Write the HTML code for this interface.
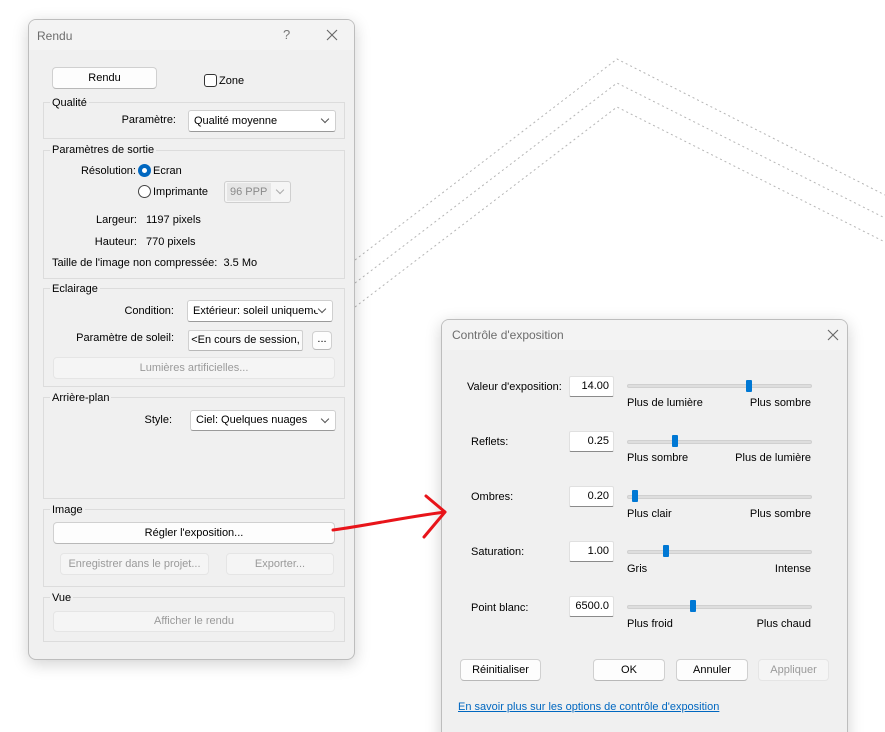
<!DOCTYPE html>
<html><head><meta charset="utf-8"><style>
*{box-sizing:border-box;margin:0;padding:0}
html,body{width:885px;height:732px;overflow:hidden}
body{background:#fff;font-family:"Liberation Sans",sans-serif;font-size:11px;color:#000;position:relative}
.a{position:absolute;white-space:nowrap;line-height:14px}
.dlg{position:absolute;background:#f0f0f0;border:1px solid #bdbdbd;border-radius:8px;box-shadow:0 4px 16px rgba(0,0,0,.18);overflow:hidden}
.tb{position:absolute;left:0;top:0;right:0;height:30px;background:#f3f3f3}
.grp{position:absolute;border:1px solid #dcdcdc}
.lbl{position:absolute;background:#f0f0f0;padding:0 2px;line-height:14px;white-space:nowrap}
.btn{position:absolute;background:#fdfdfd;border:1px solid #d0d0d0;border-bottom-color:#b8b8b8;border-radius:4px;text-align:center;line-height:20px;white-space:nowrap;overflow:hidden}
.dis{background:#f5f5f5;border-color:#e5e5e5;color:#9a9a9a}
.sel{position:absolute;background:#fff;border:1px solid #cfcfcf;border-bottom-color:#9a9a9a;border-radius:3px;padding-left:5px;line-height:20px;white-space:nowrap;overflow:hidden}
.chev{position:absolute;right:7px;top:5px;width:6px;height:6px;border-right:1px solid #555;border-bottom:1px solid #555;transform:rotate(45deg)}
.r{text-align:right}
.inp{position:absolute;width:45px;height:21px;background:#fff;border:1px solid #e0e0e0;border-bottom:1px solid #8a8a8a;border-radius:2px;text-align:right;padding-right:4px;line-height:19px}
.trk{position:absolute;left:627px;width:185px;height:4px;background:#dedede;border:1px solid #d0d0d0;border-radius:2px}
.th{position:absolute;width:6px;height:12px;background:#0078d4;border-radius:1px}
</style></head><body>

<svg style="position:absolute;left:0;top:0" width="885" height="732">
<g fill="none" stroke="#b5b5b5" stroke-width="1" stroke-dasharray="2,3">
<polyline points="355,260 617,59 885,195"/>
<polyline points="355,283 617,83 885,218"/>
<polyline points="355,307 617,107 885,242"/>
</g>
</svg>

<div class="dlg" style="left:28px;top:19px;width:327px;height:641px">
<div class="tb"></div>
<div class="a" style="left:8px;top:9px;color:#6d6d6d;font-size:12px">Rendu</div>
<div class="a" style="left:254px;top:8px;color:#777;font-size:13px">?</div>
<svg style="position:absolute;left:297px;top:9px" width="12" height="12"><path d="M1 1L11 11M11 1L1 11" stroke="#666" stroke-width="1.1"/></svg>
</div>

<div class="btn" style="left:52px;top:67px;width:105px;height:22px">Rendu</div>
<div style="position:absolute;left:204px;top:74px;width:13px;height:13px;border:1px solid #333;border-radius:3px;background:#fff"></div>
<div class="a" style="left:219px;top:74px">Zone</div>

<div class="grp" style="left:43px;top:102px;width:302px;height:37px"></div>
<div class="lbl" style="left:50px;top:96px">Qualité</div>
<div class="a r" style="left:100px;width:76px;top:113px">Paramètre:</div>
<div class="sel" style="left:188px;top:110px;width:148px;height:22px">Qualité moyenne<span class="chev"></span></div>

<div class="grp" style="left:43px;top:150px;width:302px;height:129px"></div>
<div class="lbl" style="left:50px;top:143px">Paramètres de sortie</div>
<div class="a r" style="left:60px;width:76px;top:164px">Résolution:</div>
<div style="position:absolute;left:138px;top:164px;width:13px;height:13px;border-radius:50%;background:#0067c0"><div style="position:absolute;left:4px;top:4px;width:5px;height:5px;border-radius:50%;background:#fff"></div></div>
<div class="a" style="left:153px;top:164px">Ecran</div>
<div style="position:absolute;left:138px;top:185px;width:13px;height:13px;border-radius:50%;border:1px solid #444;background:#fff"></div>
<div class="a" style="left:153px;top:185px">Imprimante</div>
<div class="sel" style="left:224px;top:181px;width:67px;height:22px;border-color:#cfcfcf;background:#f5f5f5;color:#8a8a8a;padding-left:2px"><span style="background:#e6e6e6;padding:0 3px;display:inline-block;width:44px;line-height:18px">96 PPP</span><span class="chev" style="border-color:#aaa"></span></div>
<div class="a r" style="left:60px;width:77px;top:213px">Largeur:</div>
<div class="a" style="left:146px;top:213px">1197 pixels</div>
<div class="a r" style="left:60px;width:77px;top:235px">Hauteur:</div>
<div class="a" style="left:146px;top:235px">770 pixels</div>
<div class="a" style="left:52px;top:256px">Taille de l'image non compressée:&nbsp; 3.5 Mo</div>

<div class="grp" style="left:43px;top:288px;width:302px;height:99px"></div>
<div class="lbl" style="left:50px;top:282px">Eclairage</div>
<div class="a r" style="left:60px;width:114px;top:304px">Condition:</div>
<div class="sel" style="left:187px;top:300px;width:146px;height:22px">Extérieur: soleil uniqueme<span class="chev" style="background:#fff;box-shadow:0 0 0 3px #fff"></span></div>
<div class="a r" style="left:60px;width:114px;top:331px">Paramètre de soleil:</div>
<div class="btn" style="left:188px;top:330px;width:115px;height:21px;border-radius:2px;background:#fafafa;line-height:19px">&lt;En cours de session,</div>
<div class="btn" style="left:312px;top:331px;width:20px;height:19px;line-height:15px">...</div>
<div class="btn dis" style="left:53px;top:357px;width:282px;height:22px">Lumières artificielles...</div>

<div class="grp" style="left:43px;top:397px;width:302px;height:102px"></div>
<div class="lbl" style="left:50px;top:391px">Arrière-plan</div>
<div class="a r" style="left:100px;width:72px;top:413px">Style:</div>
<div class="sel" style="left:190px;top:410px;width:146px;height:21px;line-height:19px">Ciel: Quelques nuages<span class="chev"></span></div>

<div class="grp" style="left:43px;top:509px;width:302px;height:78px"></div>
<div class="lbl" style="left:50px;top:503px">Image</div>
<div class="btn" style="left:53px;top:522px;width:282px;height:22px">Régler l'exposition...</div>
<div class="btn dis" style="left:60px;top:553px;width:149px;height:22px">Enregistrer dans le projet...</div>
<div class="btn dis" style="left:226px;top:553px;width:108px;height:22px">Exporter...</div>

<div class="grp" style="left:43px;top:597px;width:302px;height:45px"></div>
<div class="lbl" style="left:50px;top:591px">Vue</div>
<div class="btn dis" style="left:53px;top:611px;width:282px;height:21px;line-height:19px">Afficher le rendu</div>

<div class="dlg" style="left:441px;top:319px;width:407px;height:430px">
<div class="tb"></div>
<div class="a" style="left:10px;top:8px;color:#6d6d6d;font-size:12px">Contrôle d'exposition</div>
<svg style="position:absolute;left:385px;top:9px" width="12" height="12"><path d="M1 1L11 11M11 1L1 11" stroke="#666" stroke-width="1.1"/></svg>
</div>

<div class="a" style="left:467px;top:380px">Valeur d'exposition:</div>
<div class="inp" style="left:569px;top:376px">14.00</div>
<div class="trk" style="top:384px"></div><div class="th" style="left:746px;top:380px"></div>
<div class="a" style="left:627px;top:396px">Plus de lumière</div><div class="a r" style="left:700px;width:111px;top:396px">Plus sombre</div>

<div class="a" style="left:471px;top:435px">Reflets:</div>
<div class="inp" style="left:569px;top:431px">0.25</div>
<div class="trk" style="top:440px"></div><div class="th" style="left:672px;top:435px"></div>
<div class="a" style="left:627px;top:451px">Plus sombre</div><div class="a r" style="left:700px;width:111px;top:451px">Plus de lumière</div>

<div class="a" style="left:471px;top:490px">Ombres:</div>
<div class="inp" style="left:569px;top:486px">0.20</div>
<div class="trk" style="top:495px"></div><div class="th" style="left:632px;top:490px"></div>
<div class="a" style="left:627px;top:507px">Plus clair</div><div class="a r" style="left:700px;width:111px;top:507px">Plus sombre</div>

<div class="a" style="left:471px;top:545px">Saturation:</div>
<div class="inp" style="left:569px;top:541px">1.00</div>
<div class="trk" style="top:550px"></div><div class="th" style="left:663px;top:545px"></div>
<div class="a" style="left:627px;top:562px">Gris</div><div class="a r" style="left:700px;width:111px;top:562px">Intense</div>

<div class="a" style="left:471px;top:601px">Point blanc:</div>
<div class="inp" style="left:569px;top:596px">6500.0</div>
<div class="trk" style="top:605px"></div><div class="th" style="left:690px;top:600px"></div>
<div class="a" style="left:627px;top:617px">Plus froid</div><div class="a r" style="left:700px;width:111px;top:617px">Plus chaud</div>

<div class="btn" style="left:460px;top:659px;width:81px;height:22px">Réinitialiser</div>
<div class="btn" style="left:593px;top:659px;width:72px;height:22px">OK</div>
<div class="btn" style="left:676px;top:659px;width:72px;height:22px">Annuler</div>
<div class="btn dis" style="left:758px;top:659px;width:71px;height:22px">Appliquer</div>
<div class="a" style="left:458px;top:700px;color:#0067c0;text-decoration:underline">En savoir plus sur les options de contrôle d'exposition</div>

<svg style="position:absolute;left:0;top:0" width="885" height="732">
<g fill="none" stroke="#e8141a" stroke-width="3" stroke-linecap="round" stroke-linejoin="round">
<path d="M333 530 C370 525 400 518 445 512"/>
<path d="M426 496 L445 512 L424 537"/>
</g>
</svg>
</body></html>
